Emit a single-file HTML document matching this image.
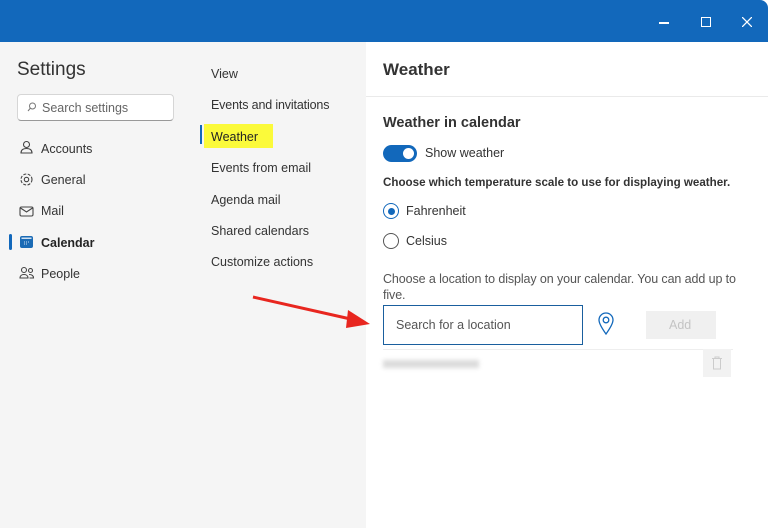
<!DOCTYPE html>
<html><head><meta charset="utf-8"><style>
*{margin:0;padding:0;box-sizing:border-box}
body{width:768px;height:528px;overflow:hidden;font-family:"Liberation Sans",sans-serif;background:#fff;position:relative;color:#242424}
.a{position:absolute}
.t{font-size:12.5px;color:#333}
</style></head><body>
<div class="a" style="left:0;top:0;width:768px;height:42px;background:#1268bb;border-radius:0 8px 0 0"></div>
<div class="a" style="left:659px;top:22px;width:10px;height:1.5px;background:#fff"></div>
<div class="a" style="left:701px;top:17px;width:10px;height:10px;border:1.3px solid #fff"></div>
<svg class="a" style="left:742px;top:17px" width="10" height="10"><path d="M0 0L10 10M10 0L0 10" stroke="#fff" stroke-width="1.3"/></svg>
<div class="a" style="left:0;top:42px;width:366px;height:486px;background:#f5f5f5"></div>
<div class="a" style="left:17px;top:59px;font-size:19px;color:#333">Settings</div>
<div class="a" style="left:17px;top:94px;width:157px;height:27px;background:#fff;border:1px solid #d6d6d6;border-bottom-color:#999;border-radius:4px"></div>
<svg class="a" style="left:27px;top:102px" width="10" height="10"><circle cx="5.5" cy="4" r="3" fill="none" stroke="#777"/><path d="M3.5 6L1 9" stroke="#777"/></svg>
<div class="a t" style="left:42px;top:101px;color:#666">Search settings</div>
<svg class="a" style="left:19px;top:140px" width="15" height="15" fill="none" stroke="#444" stroke-width="1.1"><circle cx="7.5" cy="4.5" r="3"/><path d="M2 13c0-3 2-4.5 5.5-4.5S13 10 13 13z"/></svg>
<div class="a t" style="left:41px;top:142px">Accounts</div>
<svg class="a" style="left:19px;top:172px" width="15" height="15" fill="none" stroke="#444" stroke-width="1.1"><circle cx="7.5" cy="7.5" r="2.2"/><circle cx="7.5" cy="7.5" r="5.5" stroke-dasharray="3 1.5"/></svg>
<div class="a t" style="left:41px;top:173px">General</div>
<svg class="a" style="left:19px;top:204px" width="15" height="15" fill="none" stroke="#444" stroke-width="1.1"><rect x="1" y="3" width="13" height="9" rx="1.5"/><path d="M1.5 4l6 4 6-4"/></svg>
<div class="a t" style="left:41px;top:204px">Mail</div>
<div class="a" style="left:9px;top:234px;width:3px;height:16px;background:#1268bb;border-radius:2px"></div>
<svg class="a" style="left:20px;top:236px" width="13" height="12"><rect width="13" height="12" rx="2" fill="#1b6bb5"/><rect x="1.5" y="1.5" width="10" height="1.5" fill="#cfe0f2"/><path d="M4 6h1M6 6h1M8 6h1M4 8h1M6 8h1" stroke="#cfe0f2"/></svg>
<div class="a t" style="left:41px;top:236px;font-weight:bold;color:#242424">Calendar</div>
<svg class="a" style="left:19px;top:266px" width="16" height="14" fill="none" stroke="#444" stroke-width="1.1"><circle cx="5" cy="4" r="2.5"/><circle cx="11.5" cy="4.5" r="2"/><path d="M1 12c0-2 1.5-3.5 4-3.5s4 1.5 4 3.5zM10 8.5c2.5 0 4.5 1 4.5 3.5h-4"/></svg>
<div class="a t" style="left:41px;top:267px">People</div>
<div class="a t" style="left:211px;top:67px">View</div>
<div class="a t" style="left:211px;top:98px;letter-spacing:-0.15px">Events and invitations</div>
<div class="a" style="left:200px;top:125px;width:2px;height:19px;background:#1268bb"></div>
<div class="a" style="left:204px;top:124px;width:69px;height:24px;background:#fbfa3a"></div>
<div class="a t" style="left:211px;top:130px;color:#242424">Weather</div>
<div class="a t" style="left:211px;top:161px">Events from email</div>
<div class="a t" style="left:211px;top:193px">Agenda mail</div>
<div class="a t" style="left:211px;top:224px">Shared calendars</div>
<div class="a t" style="left:211px;top:255px">Customize actions</div>
<div class="a" style="left:383px;top:60px;font-size:17px;color:#333;font-weight:bold">Weather</div>
<div class="a" style="left:366px;top:96px;width:402px;height:1px;background:#eaeaea"></div>
<div class="a" style="left:383px;top:115px;font-size:14.5px;font-weight:bold;color:#333">Weather in calendar</div>
<div class="a" style="left:383px;top:145px;width:34px;height:17px;background:#1268bb;border-radius:9px"></div>
<div class="a" style="left:403px;top:148px;width:11px;height:11px;background:#fff;border-radius:50%"></div>
<div class="a t" style="left:425px;top:146px">Show weather</div>
<div class="a" style="left:383px;top:176px;font-size:11.6px;font-weight:bold;color:#333">Choose which temperature scale to use for displaying weather.</div>
<div class="a" style="left:383px;top:203px;width:16px;height:16px;border:1.3px solid #1268bb;border-radius:50%"></div>
<div class="a" style="left:387.5px;top:207.5px;width:7px;height:7px;background:#1268bb;border-radius:50%"></div>
<div class="a t" style="left:406px;top:204px">Fahrenheit</div>
<div class="a" style="left:383px;top:233px;width:16px;height:16px;border:1.2px solid #555;border-radius:50%"></div>
<div class="a t" style="left:406px;top:234px">Celsius</div>
<div class="a t" style="left:383px;top:271px;color:#555;line-height:16px;width:370px;letter-spacing:-0.1px">Choose a location to display on your calendar. You can add up to five.</div>
<div class="a" style="left:383px;top:305px;width:200px;height:40px;border:1.5px solid #1a5f9e"></div>
<div class="a t" style="left:396px;top:318px;color:#555">Search for a location</div>
<svg class="a" style="left:597px;top:312px" width="18" height="24" fill="none" stroke="#1268bb" stroke-width="1.3"><path d="M9 22C4 15 2 11 2 8a7 7 0 0 1 14 0c0 3-2 7-7 14z"/><circle cx="9" cy="8" r="2.8"/></svg>
<div class="a" style="left:646px;top:311px;width:70px;height:28px;background:#f0f0f0"></div>
<div class="a t" style="left:669px;top:318px;color:#c4c4c4">Add</div>
<div class="a" style="left:383px;top:349px;width:350px;height:1px;background:#eee"></div>
<div class="a" style="left:383px;top:360px;width:96px;height:8px;background:#ccc;filter:blur(2px);opacity:.7"></div>
<div class="a" style="left:703px;top:349px;width:28px;height:28px;background:#f2f2f2"></div>
<svg class="a" style="left:711px;top:356px" width="12" height="14" fill="none" stroke="#ccc"><path d="M1 2.5h10M4 2.5V1h4v1.5M2.5 3v10h7V3"/></svg>
<svg class="a" style="left:250px;top:292px" width="125" height="40"><path d="M3 5L105 28" stroke="#e8261f" stroke-width="3"/><path d="M98 18L120 32L96 36z" fill="#e8261f"/></svg>
</body></html>
